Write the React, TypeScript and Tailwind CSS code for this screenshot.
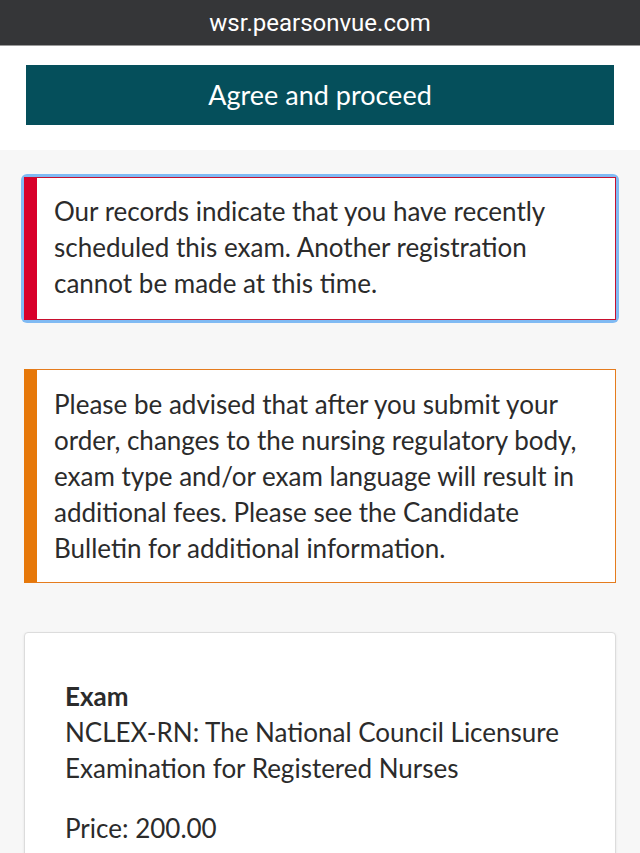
import React from "react";

const font = { fontFamily: "Lato, 'Noto Sans', sans-serif" };

const App: React.FC = () => {
  return (
    <div className="min-h-[853px] bg-[#f7f7f7]" style={font}>
      {/* アドレスバー */}
      <div className="flex h-[46px] items-center justify-center bg-[#353638] border-b border-[#9a9a9a]">
        <span className="text-[24px] text-white" style={{ fontFamily: "Roboto, 'Liberation Sans', sans-serif" }}>
          wsr.pearsonvue.com
        </span>
      </div>

      {/* 同意ボタン */}
      <div className="bg-white px-[26px] pt-[19px] pb-[25px]">
        <button className="flex h-[60px] w-full items-center justify-center bg-[#054f5b] text-[27px] text-white">
          Agree and proceed
        </button>
      </div>

      <div className="px-[24px] pt-[27px] pb-[20px]">
        {/* エラー */}
        <div className="rounded-[3px] ring-[3px] ring-[#80baf3]">
          <div className="border border-[#c8102e] border-l-[13px] border-l-[#d8002a] bg-white pl-[17px] pr-4 pt-[15px] pb-[18px] text-[26px] leading-[36px] text-[#2b2b2b]">
            Our records indicate that you have recently scheduled this exam. Another registration cannot be made at this time.
          </div>
        </div>

        {/* 注意 */}
        <div className="mt-[49px] border border-[#e57c1e] border-l-[13px] border-l-[#e6780a] bg-white pl-[17px] pr-4 pt-[16px] pb-[16px] text-[26px] leading-[36px] text-[#2b2b2b]">
          Please be advised that after you submit your order, changes to the nursing regulatory body, exam type and/or exam language will result in additional fees. Please see the Candidate Bulletin for additional information.
        </div>

        {/* 試験カード */}
        <div className="mt-[49px] rounded-[4px] border border-[#dcdcdc] bg-white px-[40px] pt-[45px] pb-[40px] text-[26px] leading-[36px] text-[#2b2b2b] shadow-[0_1px_3px_rgba(0,0,0,0.08)]">
          <div className="font-bold">Exam</div>
          <div>NCLEX-RN: The National Council Licensure Examination for Registered Nurses</div>
          <div className="mt-[24px]">Price: 200.00</div>
        </div>
      </div>
    </div>
  );
};

export default App;
